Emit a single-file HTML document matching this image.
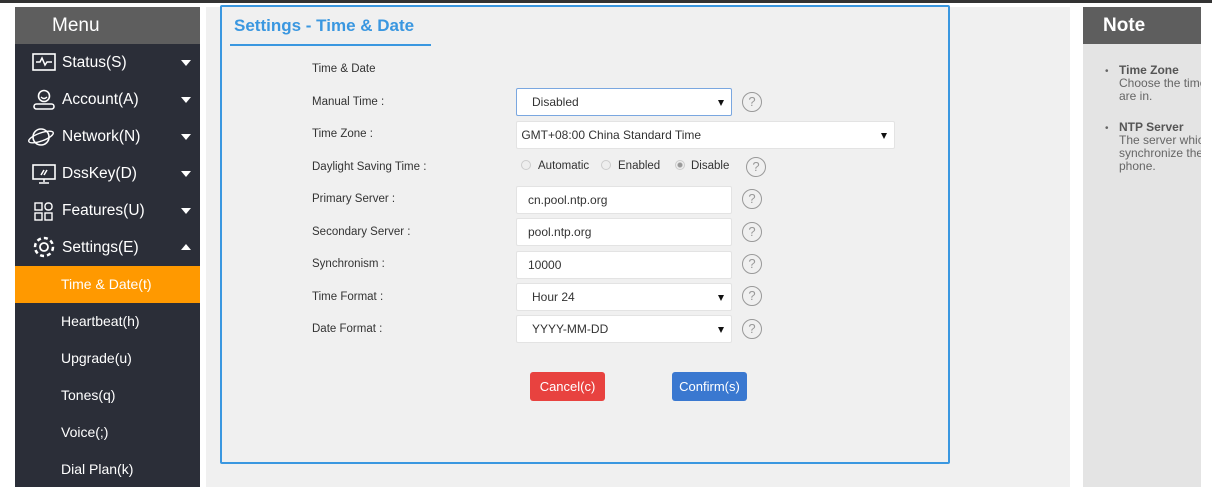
<!DOCTYPE html>
<html><head><style>
*{margin:0;padding:0;box-sizing:border-box}
body{width:1212px;height:498px;background:#fff;font-family:"Liberation Sans",sans-serif;position:relative;overflow:hidden}
.topbar{position:absolute;left:0;top:0;width:1212px;height:3px;background:#333}
.side{position:absolute;left:15px;top:7px;width:185px;height:480px;background:#2b2e38;overflow:hidden}
.side .hd{height:37px;background:#5e5e5e;color:#fff;font-size:19px;line-height:37px;padding-left:37px}
.it{height:37px;color:#fff;font-size:15.5px;line-height:37px;position:relative;padding-left:47px}
.it svg{position:absolute;left:17px;top:8px}
.it .ar{position:absolute;right:9px;top:16px;width:0;height:0;border-left:5px solid transparent;border-right:5px solid transparent;border-top:6px solid #fff}
.it .up{border-top:none;border-bottom:6px solid #fff;top:15px}
.sub{height:37px;color:#fff;font-size:14px;line-height:37px;padding-left:46px}
.sub.act{background:#ff9900}
.main{position:absolute;left:206px;top:7px;width:864px;height:480px;background:#f0f0f0}
.box{position:absolute;left:220px;top:5px;width:730px;height:459px;border:2px solid #3a97e0;border-radius:2px;background:#f0f0f0}
.title{position:absolute;left:234px;top:16px;color:#3a97e0;font-weight:bold;font-size:17px}
.tline{position:absolute;left:230px;top:44px;width:201px;height:2px;background:#3a97e0}
.lbl{position:absolute;left:312px;font-size:11.5px;color:#333}
.in{position:absolute;left:516px;width:216px;height:28px;background:#fff;border:1px solid #e3e3e3;border-radius:2px;font-size:12px;color:#333;line-height:26px;padding-left:11px}
.in.sel{padding-left:15px}
.in.sel:after{content:"";position:absolute;right:7px;top:11px;border-left:3.5px solid transparent;border-right:3.5px solid transparent;border-top:6px solid #111}
.q{position:absolute;left:742px;width:20px;height:20px;border:1.5px solid #999;border-radius:50%;color:#999;font-size:13px;text-align:center;line-height:17px}
.rad{position:absolute;width:10px;height:10px;border:1px solid #ccc;border-radius:50%;background:#eee}
.btn{position:absolute;top:372px;height:29px;color:#fff;font-size:13px;line-height:29px;text-align:center;border-radius:3px}
.note{position:absolute;left:1083px;top:7px;width:118px;height:480px;background:#e4e4e4;overflow:hidden}
.note .hd{height:37px;background:#5e5e5e;color:#fff;font-weight:bold;font-size:19px;line-height:37px;padding-left:20px}
.note p{position:absolute;left:36px;font-size:12px;color:#666;line-height:13px;white-space:nowrap}
.note b{color:#555}
.note .d{position:absolute;left:22px;font-size:10px;color:#666}
</style></head><body>
<div class="topbar"></div>
<div class="side">
<div class="hd">Menu</div>
<div class="it"><svg width="24" height="20"><rect x="1" y="2" width="22" height="16" fill="none" stroke="#fff" stroke-width="1.6"/><path d="M4 10h4l2-4 3 7 2-3h5" fill="none" stroke="#fff" stroke-width="1.5"/></svg>Status(S)<span class="ar"></span></div>
<div class="it"><svg width="24" height="22"><circle cx="12" cy="7" r="5.5" fill="none" stroke="#fff" stroke-width="1.6"/><path d="M9 8q3 3 6 0" fill="none" stroke="#fff" stroke-width="1.3"/><rect x="2" y="15" width="20" height="5" rx="2.5" fill="none" stroke="#fff" stroke-width="1.6"/></svg>Account(A)<span class="ar"></span></div>
<div class="it"><svg width="28" height="22" style="left:12px"><circle cx="14" cy="11" r="8" fill="none" stroke="#fff" stroke-width="1.6"/><ellipse cx="14" cy="11" rx="13" ry="4" fill="none" stroke="#fff" stroke-width="1.4" transform="rotate(-20 14 11)"/></svg>Network(N)<span class="ar"></span></div>
<div class="it"><svg width="24" height="22"><rect x="1" y="2" width="22" height="14" fill="none" stroke="#fff" stroke-width="1.6"/><path d="M9 12l3-5M12 12l3-5M12 16v3M7 20h10" stroke="#fff" stroke-width="1.5"/></svg>DssKey(D)<span class="ar"></span></div>
<div class="it"><svg width="22" height="22"><rect x="3" y="3" width="7" height="7" fill="none" stroke="#fff" stroke-width="1.4"/><rect x="13" y="3" width="7" height="7" rx="3" fill="none" stroke="#fff" stroke-width="1.4"/><rect x="3" y="13" width="7" height="7" fill="none" stroke="#fff" stroke-width="1.4"/><rect x="13" y="13" width="7" height="7" fill="none" stroke="#fff" stroke-width="1.4"/></svg>Features(U)<span class="ar"></span></div>
<div class="it"><svg width="26" height="24" style="left:16px;top:6px"><circle cx="13" cy="12" r="4" fill="none" stroke="#fff" stroke-width="1.8"/><circle cx="13" cy="12" r="9" fill="none" stroke="#fff" stroke-width="2.5" stroke-dasharray="4 3"/></svg>Settings(E)<span class="ar up"></span></div>
<div class="sub act">Time &amp; Date(t)</div>
<div class="sub">Heartbeat(h)</div>
<div class="sub">Upgrade(u)</div>
<div class="sub">Tones(q)</div>
<div class="sub">Voice(;)</div>
<div class="sub">Dial Plan(k)</div>
</div>
<div class="main"></div>
<div class="box"></div>
<div class="title">Settings - Time &amp; Date</div>
<div class="tline"></div>
<div class="lbl" style="top:63px">Time &amp; Date</div>
<div class="lbl" style="top:96px">Manual Time :</div>
<div class="lbl" style="top:128px">Time Zone :</div>
<div class="lbl" style="top:161px">Daylight Saving Time :</div>
<div class="lbl" style="top:193px">Primary Server :</div>
<div class="lbl" style="top:226px">Secondary Server :</div>
<div class="lbl" style="top:258px">Synchronism :</div>
<div class="lbl" style="top:291px">Time Format :</div>
<div class="lbl" style="top:323px">Date Format :</div>
<div class="in sel" style="top:88px;border-color:#7aa7e0">Disabled</div>
<div class="q" style="top:92px">?</div>
<div class="in sel" style="top:121px;width:379px;padding-left:1px;">&nbsp;GMT+08:00 China Standard Time</div>
<div class="rad" style="left:521px;top:160px"></div><div class="lbl" style="left:538px;top:160px">Automatic</div>
<div class="rad" style="left:601px;top:160px"></div><div class="lbl" style="left:618px;top:160px">Enabled</div>
<div class="rad" style="left:675px;top:160px;background:radial-gradient(#999 2px,#eee 3px)"></div><div class="lbl" style="left:691px;top:160px">Disable</div>
<div class="q" style="left:746px;top:157px">?</div>
<div class="in" style="top:186px">cn.pool.ntp.org</div><div class="q" style="top:189px">?</div>
<div class="in" style="top:218px">pool.ntp.org</div><div class="q" style="top:222px">?</div>
<div class="in" style="top:251px">10000</div><div class="q" style="top:254px">?</div>
<div class="in sel" style="top:283px">Hour 24</div><div class="q" style="top:286px">?</div>
<div class="in sel" style="top:315px">YYYY-MM-DD</div><div class="q" style="top:319px">?</div>
<div class="btn" style="left:530px;width:75px;background:#e8423f">Cancel(c)</div>
<div class="btn" style="left:672px;width:75px;background:#3a78d0">Confirm(s)</div>
<div class="note"><div class="hd">Note</div>
<span class="d" style="top:59px">•</span>
<p style="top:57px"><b>Time Zone</b><br>Choose the time zone you<br>are in.</p>
<span class="d" style="top:116px">•</span>
<p style="top:114px"><b>NTP Server</b><br>The server which will<br>synchronize the time of<br>phone.</p>
</div>
</body></html>
